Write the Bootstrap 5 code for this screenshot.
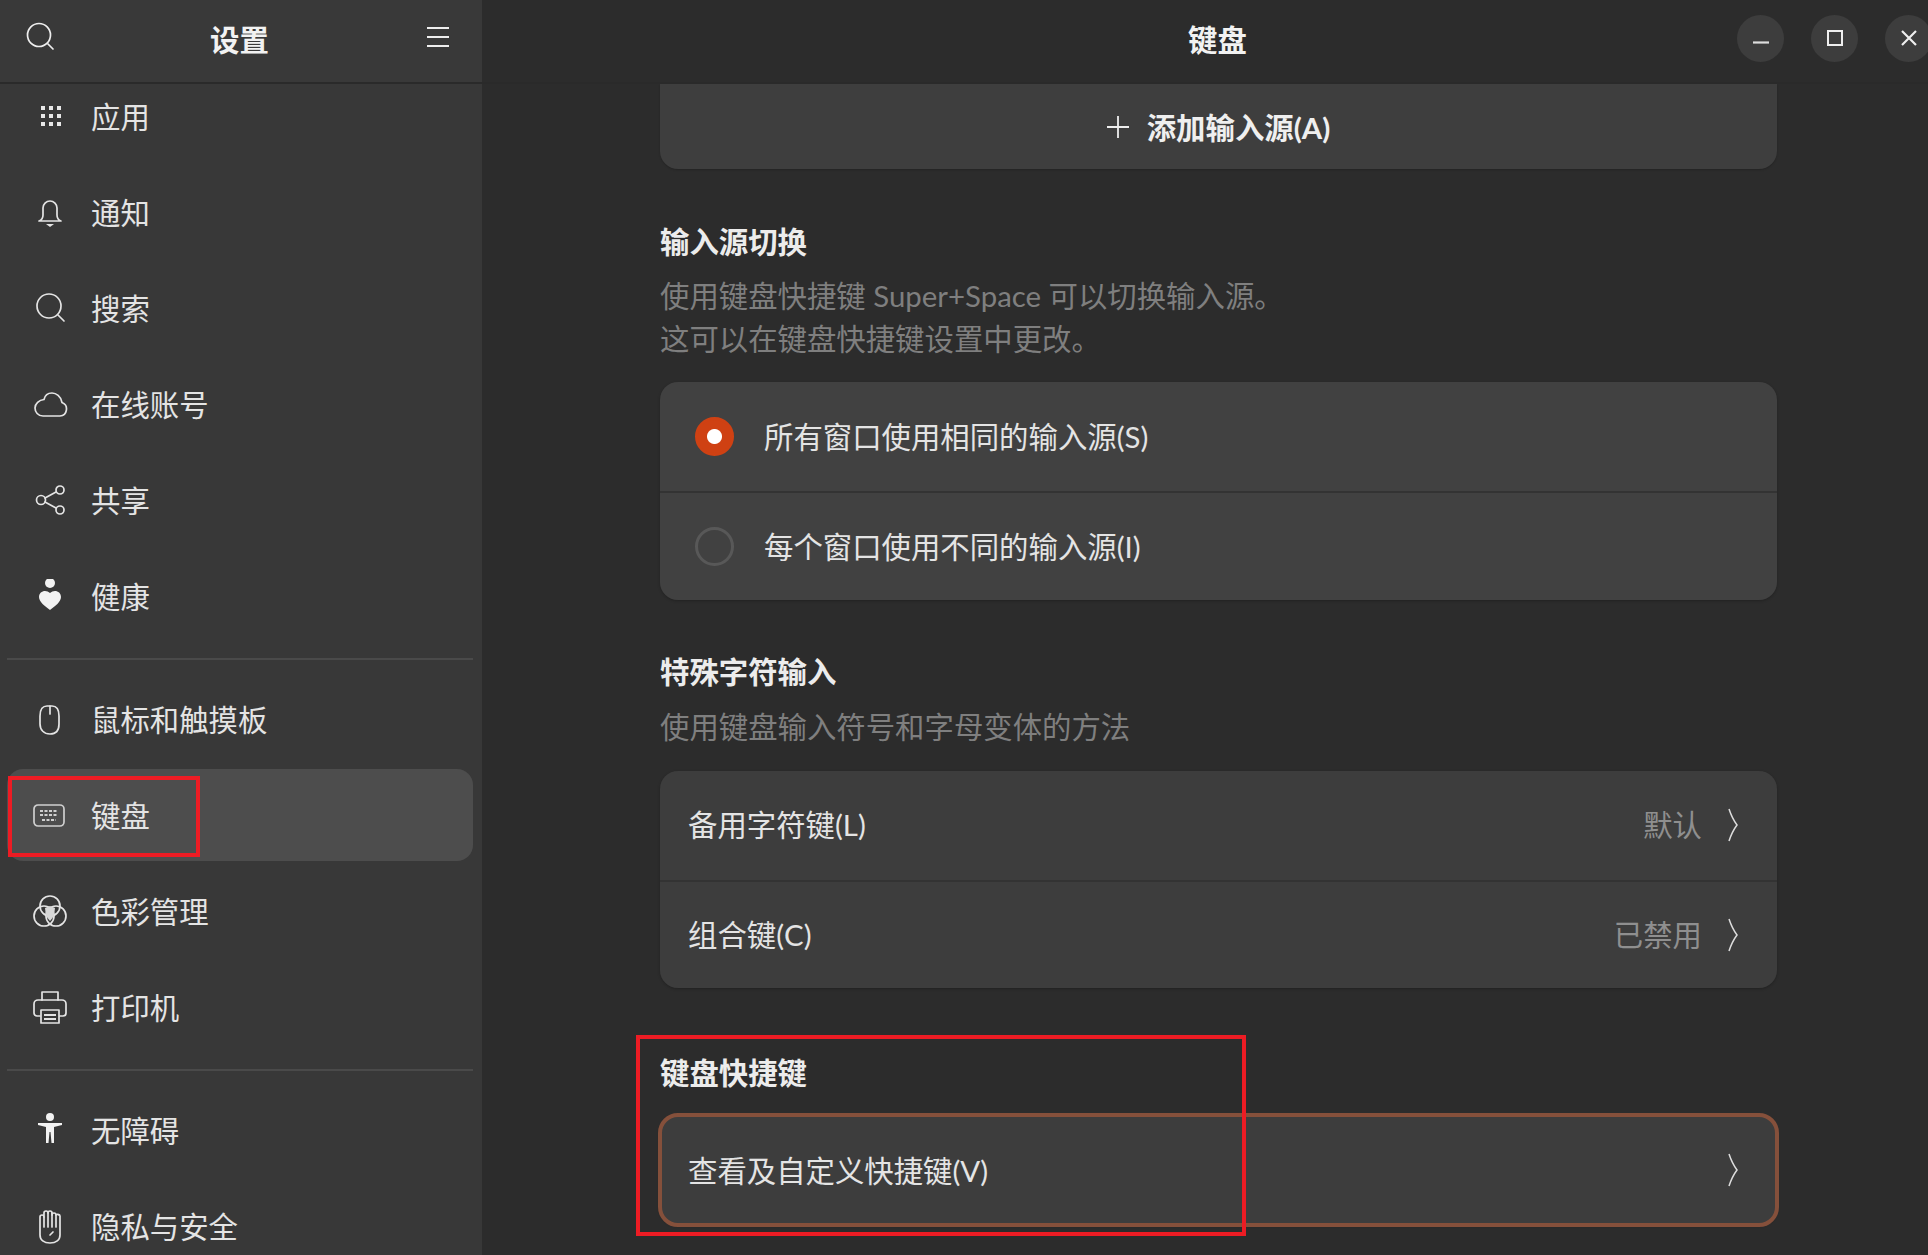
<!DOCTYPE html>
<html lang="zh-CN">
  <head>
    <meta charset="UTF-8" />
    <meta name="viewport" content="width=device-width, initial-scale=1.0" />
    <title>键盘</title>
    <link href="https://cdn.jsdelivr.net/npm/bootstrap@5.3.0/dist/css/bootstrap.min.css" rel="stylesheet" />
    <style>
      html, body {
        height: 100%;
      }
      body {
        background-color: #2c2c2c;
        color: #e8e8e8;
        font-family: Lato, "Noto Sans CJK SC", sans-serif;
        font-size: 29.4px;
        line-height: 1.5;
      }
      .app {
        height: 1255px;
        width: 1928px;
      }
      .sidebar {
        width: 482px;
        background-color: #383838;
      }
      .bar {
        height: 84px;
        border-bottom: 2px solid #2a2a2a;
        position: relative;
        z-index: 2;
      }
      .sidebar .bar {
        background-color: #393939;
      }
      .sidebar .bar svg.find {
        margin: -8px 0 0 23px;
      }
      .sidebar .bar svg.burger {
        margin: -8px 33px 0 0;
      }
      .bar-title {
        font-weight: 700;
        color: #f2f2f2;
        margin-top: -2px;
      }
      .sidebar .bar-title {
        margin-right: 5px;
      }
      .nav-rows {
        margin-top: -12.500px;
        padding: 0 9px 0 7px;
      }
      .nav-row {
        height: 91px;
        margin-bottom: 5px;
        padding-left: 25px;
        color: #e4e4e4;
        border-radius: 16px;
      }
      .nav-row.active {
        height: 92px;
        margin-top: -2px;
        margin-bottom: 6px;
        padding-top: 3px;
        background-color: #4d4d4d;
      }
      .nav-row svg {
        margin-right: 23px;
        flex-shrink: 0;
      }
      .nav-line {
        height: 2px;
        background-color: #4a4a4a;
        margin: 15px 0;
      }
      .main-pane .bar {
        background-color: #2c2c2c;
      }
      .main-pane .bar-title {
        margin-left: 706px;
      }
      .win-btns {
        gap: 27px;
        margin-right: -4px;
        margin-top: -6px;
      }
      .win-btn {
        width: 47px;
        height: 47px;
        border-radius: 50%;
        background-color: #3d3d3d;
      }
      .page {
        padding-left: 178px;
        width: 1295px;
      }
      .group-title {
        font-weight: 700;
        color: #ececec;
        margin: 51px 0 10px;
      }
      .group-desc {
        color: #7f7f7f;
        line-height: 43px;
        margin-bottom: 22px;
      }
      .group-title.special {
        margin: 50px 0 11px;
      }
      .group-desc.special {
        margin-bottom: 23px;
      }
      .group-title.keys {
        margin: 63px 0 20px;
      }
      .add-row {
        height: 85px;
        background-color: #3e3e3e;
        border-radius: 0 0 18px 18px;
        box-shadow: 0 1px 2px rgba(0, 0, 0, 0.2);
        font-weight: 700;
        color: #efefef;
      }
      .add-row svg {
        margin-right: 18px;
      }
      .add-row span {
        margin-top: 3px;
      }
      .list-group.box {
        --bs-list-group-bg: #3d3d3d;
        --bs-list-group-color: #e4e4e4;
        --bs-list-group-border-width: 0;
        --bs-list-group-border-radius: 18px;
        box-shadow: 0 1px 3px rgba(0, 0, 0, 0.25);
      }
      .list-group.box.radios {
        --bs-list-group-bg: #414141;
      }
      .box .list-group-item {
        height: 108.500px;
        padding: 0 38px 0 28px;
      }
      .box.radios .list-group-item {
        height: 109px;
        padding-left: 35px;
      }
      .box .list-group-item + .list-group-item {
        border-top: 2px solid #333;
      }
      .value {
        color: #8f8f8f;
        margin-right: 25px;
      }
      .form-check-input.choice {
        width: 39px;
        height: 39px;
        margin: 0 30px 0 0;
        background-color: transparent;
        border: 3px solid #585858;
      }
      .form-check-input.choice:checked {
        background-color: #cf4113;
        border-color: #cf4113;
        background-image: radial-gradient(circle, #fff 0 7px, transparent 8px);
      }
      .box.picked .list-group-item {
        height: 110px;
        border-radius: 18px;
        outline: 4px solid #85503b;
        outline-offset: -2px;
      }
      .box.picked .row-text {
        margin-top: 2px;
      }
      .red-box {
        position: absolute;
        border: 4px solid #ed1c24;
        z-index: 3;
        pointer-events: none;
      }
      .red-nav {
        left: 8px;
        top: 776px;
        width: 192px;
        height: 81px;
      }
      .red-keys {
        left: 636px;
        top: 1035px;
        width: 610px;
        height: 201px;
      }
      svg .s {
        fill: none;
        stroke: currentColor;
        stroke-width: 1.7;
        stroke-linecap: round;
        stroke-linejoin: round;
      }
    </style>
  </head>
  <body class="overflow-hidden">
    <div class="app d-flex position-relative overflow-hidden">
      <aside class="sidebar d-flex flex-column flex-shrink-0 overflow-hidden">
        <div class="bar d-flex align-items-center justify-content-between flex-shrink-0">
          <svg class="find" width="34" height="34" viewBox="0 0 34 34"><g class="s" style="color:#eee"><circle cx="16" cy="15" r="11.500"/><path d="M25 24l5 5"/></g></svg>
          <span class="bar-title">设置</span>
          <svg class="burger" width="22" height="22" viewBox="0 0 22 22"><path d="M0 2h22M0 11h22M0 20h22" stroke="#eee" stroke-width="1.800"/></svg>
        </div>
        <div class="nav-rows">
          <div class="nav-row d-flex align-items-center">
            <svg width="36" height="36" viewBox="0 0 36 36" fill="#e8e8e8"><rect x="9" y="7" width="4" height="4"/><rect x="17" y="7" width="4" height="4"/><rect x="25" y="7" width="4" height="4"/><rect x="9" y="15" width="4" height="4"/><rect x="17" y="15" width="4" height="4"/><rect x="25" y="15" width="4" height="4"/><rect x="9" y="23" width="4" height="4"/><rect x="17" y="23" width="4" height="4"/><rect x="25" y="23" width="4" height="4"/></svg>
            <span>应用</span>
          </div>
          <div class="nav-row d-flex align-items-center">
            <svg width="36" height="36" viewBox="0 0 36 36"><g class="s"><path d="M7 26c3-1 4-3 4-6v-7a7 7 0 0 1 14 0v7c0 3 1 5 4 6z"/></g><path d="M14 29h8l-4 3z" fill="currentColor"/></svg>
            <span>通知</span>
          </div>
          <div class="nav-row d-flex align-items-center">
            <svg width="36" height="36" viewBox="0 0 36 36"><g class="s"><circle cx="17" cy="15" r="12"/><path d="M26 24l6 6"/></g></svg>
            <span>搜索</span>
          </div>
          <div class="nav-row d-flex align-items-center">
            <svg width="36" height="36" viewBox="0 0 36 36"><g class="s"><path d="M11 29h17a7 7 0 0 0 2-13.500C29 9 24 6 20 6c-4 0-7 2-8 6.500C7 13 3 17 3 21s3 8 8 8z"/></g></svg>
            <span>在线账号</span>
          </div>
          <div class="nav-row d-flex align-items-center">
            <svg width="36" height="36" viewBox="0 0 36 36"><g class="s"><circle cx="9" cy="17" r="4.500"/><circle cx="28" cy="7" r="4"/><circle cx="28" cy="27" r="4"/><path d="M13 15l11-6M13 19l11 6"/></g></svg>
            <span>共享</span>
          </div>
          <div class="nav-row d-flex align-items-center">
            <svg width="36" height="36" viewBox="0 0 36 36" fill="#f2f2f2"><circle cx="18" cy="4" r="5"/><path d="M18 31c-5-4-11-8-11-13 0-6 7-8 11-4 4-4 11-2 11 4 0 5-6 9-11 13z"/></svg>
            <span>健康</span>
          </div>
          <div class="nav-line"></div>
          <div class="nav-row d-flex align-items-center">
            <svg width="36" height="36" viewBox="0 0 36 36"><g class="s"><path d="M8 14c0-7 3-10 7-10h5c4 0 7 3 7 10v8c0 6-3 10-9 10s-10-4-10-10z"/><path d="M18 4v8"/></g></svg>
            <span>鼠标和触摸板</span>
          </div>
          <div class="nav-row active d-flex align-items-center">
            <svg width="36" height="36" viewBox="0 0 36 36"><rect class="s" x="2" y="7" width="30" height="21" rx="4" style="stroke:#cfcfcf"/><path d="M8 13h18M8 17h18M10 22h14" stroke="#cfcfcf" stroke-width="2" stroke-dasharray="3 1.500"/></svg>
            <span>键盘</span>
          </div>
          <div class="nav-row d-flex align-items-center">
            <svg width="36" height="36" viewBox="0 0 36 36"><g class="s"><circle cx="18" cy="12" r="10"/><circle cx="12" cy="22" r="10"/><circle cx="24" cy="22" r="10"/></g><path d="M13 14l5-2 5 2-1 8-4 5-4-5z" fill="#d8d8d8"/></svg>
            <span>色彩管理</span>
          </div>
          <div class="nav-row d-flex align-items-center">
            <svg width="36" height="36" viewBox="0 0 36 36"><g class="s"><path d="M10 10V2h16v8"/><path d="M8 26H5a3 3 0 0 1-3-3v-9a4 4 0 0 1 4-4h24a4 4 0 0 1 4 4v9a3 3 0 0 1-3 3h-3"/><rect x="9" y="20" width="18" height="13"/></g><path d="M12 25h12M12 29h12" stroke="currentColor" stroke-width="2"/></svg>
            <span>打印机</span>
          </div>
          <div class="nav-line"></div>
          <div class="nav-row d-flex align-items-center">
            <svg width="36" height="36" viewBox="0 0 36 36" fill="#f2f2f2"><circle cx="18" cy="4" r="4"/><path d="M6 10h24v2l-8 2v16h-2.500l-1-11h-1l-1 11H14V14l-8-2z"/></svg>
            <span>无障碍</span>
          </div>
          <div class="nav-row d-flex align-items-center">
            <svg width="36" height="36" viewBox="0 0 36 36"><g class="s"><path d="M8 18V8a2 2 0 0 1 4 0V4a2 2 0 0 1 4 0v0a2 2 0 0 1 4 0v2a2 2 0 0 1 4 0c0-1 4-1 4 1v19c0 5-4 8-10 8s-10-3-10-8z"/><path d="M12 8v10M16 4v14M20 4v14M24 6v12M18 26l3-3"/></g></svg>
            <span>隐私与安全</span>
          </div>
        </div>
      </aside>
      <main class="flex-grow-1 overflow-hidden main-pane">
        <div class="bar d-flex align-items-center">
          <span class="bar-title">键盘</span>
          <div class="win-btns d-flex ms-auto">
            <div class="win-btn d-flex align-items-center justify-content-center">
              <svg width="18" height="18" viewBox="0 0 18 18"><path d="M1 13.500h16" stroke="#ddd" stroke-width="2.200"/></svg>
            </div>
            <div class="win-btn d-flex align-items-center justify-content-center">
              <svg width="18" height="18" viewBox="0 0 18 18"><rect x="2" y="2" width="14" height="14" fill="none" stroke="#eee" stroke-width="2"/></svg>
            </div>
            <div class="win-btn d-flex align-items-center justify-content-center">
              <svg width="18" height="18" viewBox="0 0 18 18"><path d="M2 2l14 14M16 2L2 16" stroke="#eee" stroke-width="2.200"/></svg>
            </div>
          </div>
        </div>
        <div class="page">
          <div class="add-row d-flex align-items-center justify-content-center">
            <svg width="22" height="22" viewBox="0 0 22 22"><path d="M11 0v22M0 11h22" stroke="#eee" stroke-width="1.800"/></svg>
            <span>添加输入源(A)</span>
          </div>

          <div class="group-title">输入源切换</div>
          <div class="group-desc">使用键盘快捷键 Super+Space 可以切换输入源。<br />这可以在键盘快捷键设置中更改。</div>
          <div class="list-group box radios">
            <label class="list-group-item d-flex align-items-center">
              <input class="form-check-input choice" type="radio" name="src" checked />
              <span class="row-text">所有窗口使用相同的输入源(S)</span>
            </label>
            <label class="list-group-item d-flex align-items-center">
              <input class="form-check-input choice" type="radio" name="src" />
              <span class="row-text">每个窗口使用不同的输入源(I)</span>
            </label>
          </div>

          <div class="group-title special">特殊字符输入</div>
          <div class="group-desc special">使用键盘输入符号和字母变体的方法</div>
          <div class="list-group box">
            <div class="list-group-item d-flex align-items-center">
              <span class="row-text">备用字符键(L)</span>
              <span class="value row-text ms-auto">默认</span>
              <svg width="12" height="34" viewBox="0 0 12 34"><path d="M2 1c2 6 5 12 8 16-3 4-6 10-8 16" fill="none" stroke="#ddd" stroke-width="1.500"/></svg>
            </div>
            <div class="list-group-item d-flex align-items-center">
              <span class="row-text">组合键(C)</span>
              <span class="value row-text ms-auto">已禁用</span>
              <svg width="12" height="34" viewBox="0 0 12 34"><path d="M2 1c2 6 5 12 8 16-3 4-6 10-8 16" fill="none" stroke="#ddd" stroke-width="1.500"/></svg>
            </div>
          </div>

          <div class="group-title keys">键盘快捷键</div>
          <div class="list-group box picked">
            <div class="list-group-item d-flex align-items-center justify-content-between">
              <span class="row-text">查看及自定义快捷键(V)</span>
              <svg width="12" height="34" viewBox="0 0 12 34"><path d="M2 1c2 6 5 12 8 16-3 4-6 10-8 16" fill="none" stroke="#ddd" stroke-width="1.500"/></svg>
            </div>
          </div>
        </div>
      </main>
      <div class="red-box red-nav"></div>
      <div class="red-box red-keys"></div>
    </div>
    <script src="https://cdn.jsdelivr.net/npm/bootstrap@5.3.0/dist/js/bootstrap.bundle.min.js"></script>
  </body>
</html>
